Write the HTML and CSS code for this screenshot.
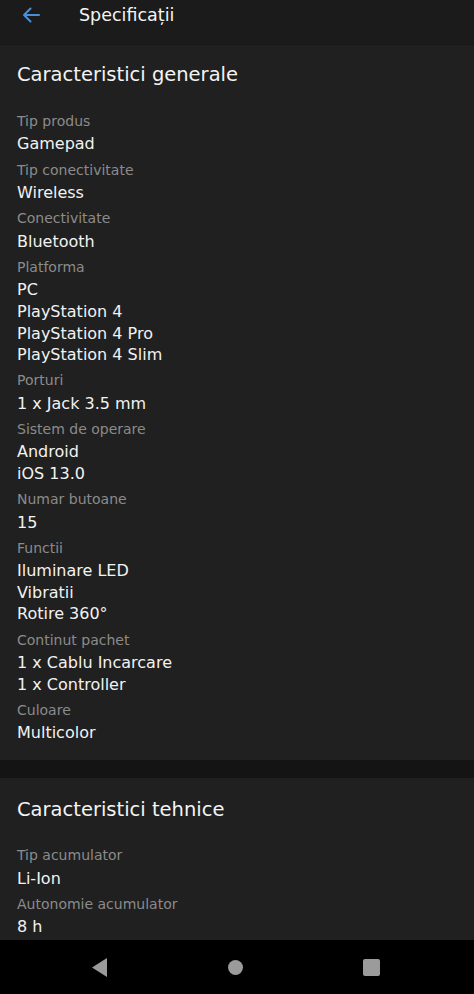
FILE: index.html
```html
<!DOCTYPE html>
<html lang="ro">
<head>
<meta charset="utf-8">
<title>Specificații</title>
<link rel="stylesheet" href="styles.css">
</head>
<body>
<div class="screen">
  <header class="topbar">
    <svg class="back" width="18" height="16" viewBox="0 0 18 16" aria-hidden="true">
      <path d="M17 8H2M8.5 1.5L2 8l6.5 6.5" fill="none" stroke="#4a8fd6" stroke-width="2" stroke-linecap="round" stroke-linejoin="round"/>
    </svg>
    <h1 class="topbar-title">Specificații</h1>
  </header>
  <main class="content">
    <section class="group">
      <h2 class="group-title">Caracteristici generale</h2>
      <dl class="specs">
        <div class="spec"><dt>Tip produs</dt><dd>Gamepad</dd></div>
        <div class="spec"><dt>Tip conectivitate</dt><dd>Wireless</dd></div>
        <div class="spec"><dt>Conectivitate</dt><dd>Bluetooth</dd></div>
        <div class="spec"><dt>Platforma</dt><dd>PC</dd><dd>PlayStation 4</dd><dd>PlayStation 4 Pro</dd><dd>PlayStation 4 Slim</dd></div>
        <div class="spec"><dt>Porturi</dt><dd>1 x Jack 3.5 mm</dd></div>
        <div class="spec"><dt>Sistem de operare</dt><dd>Android</dd><dd>iOS 13.0</dd></div>
        <div class="spec"><dt>Numar butoane</dt><dd>15</dd></div>
        <div class="spec"><dt>Functii</dt><dd>Iluminare LED</dd><dd>Vibratii</dd><dd>Rotire 360°</dd></div>
        <div class="spec"><dt>Continut pachet</dt><dd>1 x Cablu Incarcare</dd><dd>1 x Controller</dd></div>
        <div class="spec"><dt>Culoare</dt><dd>Multicolor</dd></div>
      </dl>
    </section>
    <div class="divider"></div>
    <section class="group group-second">
      <h2 class="group-title">Caracteristici tehnice</h2>
      <dl class="specs">
        <div class="spec"><dt>Tip acumulator</dt><dd>Li-Ion</dd></div>
        <div class="spec"><dt>Autonomie acumulator</dt><dd>8 h</dd></div>
      </dl>
    </section>
  </main>
  <nav class="navbar">
    <svg width="15" height="19" viewBox="0 0 15 19" aria-hidden="true"><path d="M15 0V19L0 9.5Z" fill="#9b9b9b"/></svg>
    <svg width="15" height="15" viewBox="0 0 15 15" aria-hidden="true"><circle cx="7.5" cy="7.5" r="7.5" fill="#9b9b9b"/></svg>
    <svg width="17" height="17" viewBox="0 0 17 17" aria-hidden="true"><rect width="17" height="17" rx="2" fill="#9b9b9b"/></svg>
  </nav>
</div>
</body>
</html>
```

FILE: styles.css
```css
* { box-sizing: border-box; }
html, body {
  margin: 0;
  padding: 0;
  background: #202020;
}
body {
  font-family: "DejaVu Sans", "Noto Sans", sans-serif;
  color: #f2f2f2;
}
.screen {
  height: 100vh;
  display: flex;
  flex-direction: column;
  overflow: hidden;
}
.topbar {
  flex: 0 0 45px;
  display: flex;
  align-items: flex-start;
  background: #1b1b1b;
  border-bottom: 1px solid #181818;
  padding-left: 22px;
}
.back {
  margin-top: 7px;
}
.topbar-title {
  margin: 0 0 0 39px;
  font-size: 17.5px;
  font-weight: normal;
  line-height: 31px;
  color: #f4f4f4;
}
.content {
  flex: 1 1 auto;
  overflow: hidden;
}
.group {
  padding: 15px 17px 13px;
}
.group-second {
  padding-top: 17px;
}
.group-title {
  margin: 0 0 20px;
  font-size: 19.5px;
  font-weight: normal;
  line-height: 30px;
  color: #f4f4f4;
}
.group-second .group-title {
  margin-bottom: 19px;
}
.specs {
  margin: 0;
}
.spec {
  margin-bottom: 3.6px;
}
.spec dt {
  margin-bottom: 1.45px;
  font-size: 14px;
  line-height: 22px;
  color: #8b8b8b;
}
.spec dd {
  margin: 0;
  font-size: 16px;
  line-height: 21.6px;
  color: #f2f2f2;
}
.divider {
  height: 18px;
  background: #141414;
}
.navbar {
  flex: 0 0 54px;
  background: #000;
  display: flex;
  align-items: center;
  justify-content: space-between;
  padding: 0 94px 0 92px;
}
```
